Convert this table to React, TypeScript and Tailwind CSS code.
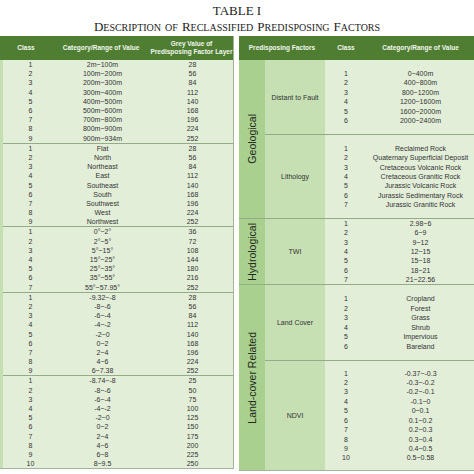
const leftSections: [string, string][][] = [
  [
    ["2m~100m", "28"],
    ["100m~200m", "56"],
    ["200m~300m", "84"],
    ["300m~400m", "112"],
    ["400m~500m", "140"],
    ["500m~600m", "168"],
    ["700m~800m", "196"],
    ["800m~900m", "224"],
    ["900m~934m", "252"],
  ],
  [
    ["Flat", "28"],
    ["North", "56"],
    ["Northeast", "84"],
    ["East", "112"],
    ["Southeast", "140"],
    ["South", "168"],
    ["Southwest", "196"],
    ["West", "224"],
    ["Northwest", "252"],
  ],
  [
    ["0°~2°", "36"],
    ["2°~5°", "72"],
    ["5°~15°", "108"],
    ["15°~25°", "144"],
    ["25°~35°", "180"],
    ["35°~55°", "216"],
    ["55°~57.95°", "252"],
  ],
  [
    ["-9.32~-8", "28"],
    ["-8~-6", "56"],
    ["-6~-4", "84"],
    ["-4~-2", "112"],
    ["-2~0", "140"],
    ["0~2", "168"],
    ["2~4", "196"],
    ["4~6", "224"],
    ["6~7.38", "252"],
  ],
  [
    ["-8.74~-8", "25"],
    ["-8~-6", "50"],
    ["-6~-4", "75"],
    ["-4~-2", "100"],
    ["-2~0", "125"],
    ["0~2", "150"],
    ["2~4", "175"],
    ["4~6", "200"],
    ["6~8", "225"],
    ["8~9.5", "250"],
  ],
];

type Factor = { name: string; h: string; values: string[] };
type Group = { name: string; factors: Factor[] };

const groups: Group[] = [
  {
    name: "Geological",
    factors: [
      {
        name: "Distant to Fault",
        h: "h-[74px]",
        values: ["0~400m", "400~800m", "800~1200m", "1200~1600m", "1600~2000m", "2000~2400m"],
      },
      {
        name: "Lithology",
        h: "h-[84px]",
        values: [
          "Reclaimed Rock",
          "Quaternary Superficial Deposit",
          "Cretaceous Volcanic Rock",
          "Cretaceous Granitic Rock",
          "Jurassic Volcanic Rock",
          "Jurassic Sedimentary Rock",
          "Jurassic Granitic Rock",
        ],
      },
    ],
  },
  {
    name: "Hydrological",
    factors: [
      {
        name: "TWI",
        h: "h-[65px]",
        values: ["2.98~6", "6~9", "9~12", "12~15", "15~18", "18~21", "21~22.56"],
      },
    ],
  },
  {
    name: "Land-cover Related",
    factors: [
      {
        name: "Land Cover",
        h: "h-[75px]",
        values: ["Cropland", "Forest", "Grass", "Shrub", "Impervious", "Bareland"],
      },
      {
        name: "NDVI",
        h: "h-[110px]",
        values: [
          "-0.37~-0.3",
          "-0.3~-0.2",
          "-0.2~-0.1",
          "-0.1~0",
          "0~0.1",
          "0.1~0.2",
          "0.2~0.3",
          "0.3~0.4",
          "0.4~0.5",
          "0.5~0.58",
        ],
      },
    ],
  },
];

// subtitle words in small caps: first letter large, rest small
const subtitle: [string, string][] = [
  ["D", "ESCRIPTION"],
  ["", "OF"],
  ["R", "ECLASSIFIED"],
  ["P", "REDISPOSING"],
  ["F", "ACTORS"],
];

function LeftTable() {
  return (
    <div className="w-[234px] shrink-0 border-r border-b border-[#a3b39c]">
      <div className="h-[24px] bg-[#4f7e33] flex items-center text-[#f2f6ee] font-bold text-[6.5px] leading-[8px]">
        <div className="w-[52px] text-center">Class</div>
        <div className="w-[98px] text-center">Category/Range of Value</div>
        <div className="flex-1 text-center">
          Grey Value of
          <br />
          Predisposing Factor Layer
        </div>
      </div>
      <div className="bg-[#e3eed9] border-l-[3px] border-[#c4dfb1]">
        {leftSections.map((sec, i) => (
          <div key={i} className={i ? "border-t border-[#93ab86]" : ""}>
            {sec.map(([cat, grey], j) => (
              <div key={j} className="h-[9.2px] flex items-center text-[7px] leading-none">
                <div className="w-[52px] text-center pl-[3px]">{j + 1}</div>
                <div className="w-[95px] text-center">{cat}</div>
                <div className="flex-1 text-center pl-[2px]">{grey}</div>
              </div>
            ))}
          </div>
        ))}
      </div>
    </div>
  );
}

function RightTable() {
  return (
    <div className="flex-1 border-b border-[#a3b39c]">
      <div className="h-[24px] bg-[#4f7e33] flex items-center text-[#f2f6ee] font-bold text-[6.5px] leading-[8px]">
        <div className="w-[86px] text-center">Predisposing Factors</div>
        <div className="w-[42px] text-center">Class</div>
        <div className="flex-1 text-center">Category/Range of Value</div>
      </div>
      {groups.map((g, gi) => (
        <div key={g.name} className={`flex ${gi ? "border-t border-[#93ab86]" : ""}`}>
          <div className="w-[26px] shrink-0 bg-[#a9d08f] flex items-center justify-center">
            <span className="[writing-mode:vertical-rl] rotate-180 text-[10.5px] leading-none text-[#1f2a1a] whitespace-nowrap">
              {g.name}
            </span>
          </div>
          <div className="flex-1">
            {g.factors.map((f, fi) => (
              <div key={f.name} className={`flex ${f.h} ${fi ? "border-t border-[#93ab86]" : ""}`}>
                <div className="w-[60px] shrink-0 bg-[#c6e0b4] flex items-center justify-center text-[7px] leading-none">
                  {f.name}
                </div>
                <div className="flex-1 bg-[#e3eed9] flex flex-col justify-center">
                  {f.values.map((v, vi) => (
                    <div key={vi} className="h-[9.45px] flex items-center text-[7px] leading-none">
                      <div className="w-[42px] text-center">{vi + 1}</div>
                      <div className="flex-1 text-center whitespace-nowrap">{v}</div>
                    </div>
                  ))}
                </div>
              </div>
            ))}
          </div>
        </div>
      ))}
    </div>
  );
}

export default function App() {
  return (
    <div className="w-[474px] h-[474px] bg-white overflow-hidden font-['Liberation_Sans',Arial,sans-serif] text-[#333]">
      <div className="h-[36px] flex flex-col items-center font-['Liberation_Serif','Times_New_Roman',serif] text-[#222]">
        <div className="text-[13px] leading-none mt-[4px]">TABLE I</div>
        <div className="flex items-baseline gap-[4px] leading-none mt-[1px]">
          {subtitle.map(([big, small], i) => (
            <span key={i}>
              {big && <span className="text-[13px]">{big}</span>}
              <span className="text-[10px]">{small}</span>
            </span>
          ))}
        </div>
      </div>
      <div className="flex gap-[5px] items-start">
        <LeftTable />
        <RightTable />
      </div>
    </div>
  );
}
